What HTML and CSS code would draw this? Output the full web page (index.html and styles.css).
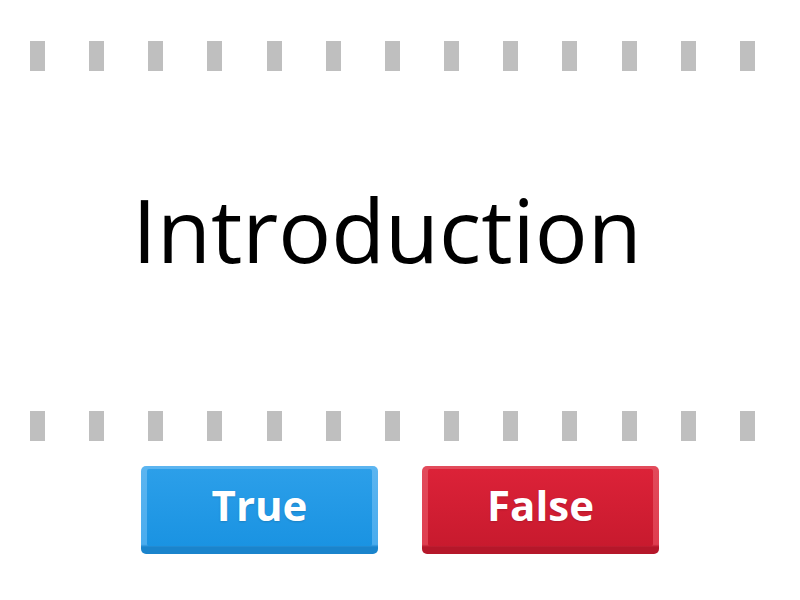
FILE: index.html
```html
<!DOCTYPE html>
<html lang="en">
<head>
    <meta charset="UTF-8">
    <meta name="viewport" content="width=device-width, initial-scale=1.0">
    <title>True or False</title>
    <link rel="stylesheet" href="styles.css">
</head>
<body>
    <div class="card">
        <div class="dashes">
            <span></span><span></span><span></span><span></span><span></span><span></span><span></span>
            <span></span><span></span><span></span><span></span><span></span><span></span>
        </div>

        <div class="question">Introduction</div>

        <div class="dashes">
            <span></span><span></span><span></span><span></span><span></span><span></span><span></span>
            <span></span><span></span><span></span><span></span><span></span><span></span>
        </div>
    </div>

    <div class="answers">
        <button class="answer true"><span>True</span></button>
        <button class="answer false"><span>False</span></button>
    </div>
</body>
</html>
```

FILE: styles.css
```css
body { margin: 0; background: #fff; font-family: "Open Sans", Arial, sans-serif; width: 800px; height: 600px; overflow: hidden; }
.card { padding-top: 41px; }
.dashes { display: flex; justify-content: space-between; padding: 0 45px 0 30px; }
.dashes span { width: 15px; height: 30px; background: #bfbfbf; }
.question { height: 340px; display: flex; align-items: center; justify-content: center; font-size: 88px; color: #000; padding-right: 26px; padding-bottom: 25px; box-sizing: border-box; }
.answers { display: flex; justify-content: center; gap: 44px; margin-top: 25px; }
.answer { width: 237px; height: 88px; padding: 3px 6px 8px; border: none; border-radius: 5px; font-family: inherit; cursor: pointer; }
.answer span { display: flex; height: 100%; align-items: center; justify-content: center; padding-bottom: 6px; box-sizing: border-box; border-radius: 2px; color: #fff; font-size: 42px; font-weight: bold; text-shadow: 0 1px 2px rgba(0,0,0,0.15); }
.true { background: linear-gradient(#5cb5f0, #4aacee 89%, #1a84cc 92%); }
.true span { background: linear-gradient(#2c9fe9, #1a93e2); }
.false { background: linear-gradient(#e24b5b, #df3e50 89%, #b5172a 92%); }
.false span { background: linear-gradient(#dc2238, #c81a2e); }
```
